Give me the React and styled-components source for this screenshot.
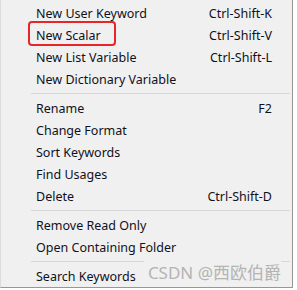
import styled, { createGlobalStyle } from "styled-components";

const GlobalStyle = createGlobalStyle`
body {
  margin: 0;
  background: #ffffff;
  font-family: "Noto Sans", "Open Sans", sans-serif;
}
`

const groups = [
    [
        { label: "New User Keyword", key: "Ctrl-Shift-K" },
        { label: "New Scalar", key: "Ctrl-Shift-V", marked: true },
        { label: "New List Variable", key: "Ctrl-Shift-L" },
        { label: "New Dictionary Variable" },
    ],
    [
        { label: "Rename", key: "F2" },
        { label: "Change Format" },
        { label: "Sort Keywords" },
        { label: "Find Usages" },
        { label: "Delete", key: "Ctrl-Shift-D" },
    ],
    [
        { label: "Remove Read Only" },
        { label: "Open Containing Folder" },
    ],
    [
        { label: "Search Keywords" },
    ],
]

const App = () => {
    return (
        <>
            <GlobalStyle />
            <Page>
                <Menu>
                    {groups.map((group, gi) => (
                        <Group key={gi}>
                            {gi > 0 && <Separator />}
                            {group.map((item) => (
                                <Item key={item.label}>
                                    <Label>
                                        {item.label}
                                        {item.marked && <Mark />}
                                    </Label>
                                    {item.key && <Shortcut>{item.key}</Shortcut>}
                                </Item>
                            ))}
                        </Group>
                    ))}
                    <Watermark>CSDN @西欧伯爵</Watermark>
                </Menu>
            </Page>
        </>
    )
}

const Page = styled.div`
width: 297px;
height: 290px;
overflow: hidden;
`

const Menu = styled.div`
position: relative;
width: 293px;
height: 288px;
box-sizing: border-box;
padding-top: 2px;
background-color: #f0f0f0;
border-right: 1px solid #979797;
border-bottom: 1px solid #979797;
border-left: 1px solid #dcdcdc;
`

const Group = styled.div`
display: flex;
flex-direction: column;
`

const Separator = styled.div`
height: 1px;
margin: 3px 2px 3px 30px;
background-color: #d7d7d7;
`

const Item = styled.div`
display: flex;
align-items: center;
justify-content: space-between;
height: 22px;
padding: 0 20px 0 35px;
font-size: 12.5px;
color: #101020;
`

const Label = styled.span`
position: relative;
`

const Mark = styled.span`
position: absolute;
left: -8px;
top: -6px;
width: 84px;
height: 21px;
border: 2px solid #e8262a;
border-radius: 4px;
`

const Shortcut = styled.span`
font-size: 12.5px;
`

const Watermark = styled.div`
position: absolute;
right: 11px;
bottom: 2px;
padding: 2px 0 2px 4px;
background-color: #f0f0f0;
color: #b4b4b4;
font-family: "Noto Sans", "Noto Sans CJK SC", sans-serif;
font-size: 17px;
line-height: 20px;
`

export default App;
